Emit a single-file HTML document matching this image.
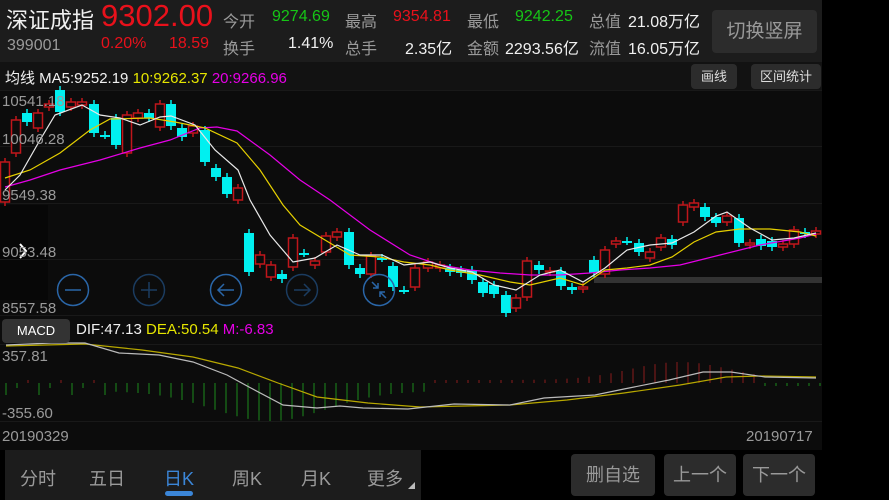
<!DOCTYPE html>
<html><head><meta charset="utf-8">
<style>
*{margin:0;padding:0;box-sizing:border-box}
body{width:889px;height:500px;background:#000;overflow:hidden;position:relative;font-family:"Liberation Sans","Noto Sans CJK SC",sans-serif;}
.a{position:absolute;white-space:nowrap}
#hdr{position:absolute;left:0;top:0;width:822px;height:62px;background:#1c1c1c}
#tb{position:absolute;left:0;top:62px;width:822px;height:28px;background:#121212}
#ch{position:absolute;left:0;top:90px;width:822px;height:360px;background:#0c0c0c}
#nav{position:absolute;left:822px;top:0;width:67px;height:500px;background:#000}
.g{color:#9a9a9a}.w{color:#f0f0f0}.r{color:#e8111b}.gr{color:#16c516}
.btn{position:absolute;background:#2c2c2c;border-radius:4px;color:#999;text-align:center}
</style></head><body>
<div id="hdr"></div><div id="tb"></div><div id="ch"></div><div id="nav"></div>

<div class="a w" style="left:6px;top:3px;font-size:22px">深证成指</div>
<div class="a r" style="left:101px;top:-2px;font-size:31px">9302.00</div>
<div class="a g" style="left:223px;top:8px;font-size:16px">今开</div>
<div class="a gr" style="left:272px;top:8px;font-size:16px">9274.69</div>
<div class="a g" style="left:345px;top:8px;font-size:16px">最高</div>
<div class="a r" style="left:393px;top:8px;font-size:16px">9354.81</div>
<div class="a g" style="left:467px;top:8px;font-size:16px">最低</div>
<div class="a gr" style="left:515px;top:8px;font-size:16px">9242.25</div>
<div class="a g" style="left:589px;top:8px;font-size:16px">总值</div>
<div class="a w" style="left:628px;top:8px;font-size:16px">21.08万亿</div>
<div class="a g" style="left:7px;top:37px;font-size:16px">399001</div>
<div class="a r" style="left:101px;top:35px;font-size:16px">0.20%</div>
<div class="a r" style="left:169px;top:35px;font-size:16px">18.59</div>
<div class="a g" style="left:223px;top:35px;font-size:16px">换手</div>
<div class="a w" style="left:288px;top:35px;font-size:16px">1.41%</div>
<div class="a g" style="left:345px;top:35px;font-size:16px">总手</div>
<div class="a w" style="left:405px;top:35px;font-size:16px">2.35亿</div>
<div class="a g" style="left:467px;top:35px;font-size:16px">金额</div>
<div class="a w" style="left:505px;top:35px;font-size:16px">2293.56亿</div>
<div class="a g" style="left:589px;top:35px;font-size:16px">流值</div>
<div class="a w" style="left:628px;top:35px;font-size:16px">16.05万亿</div>
<div class="btn" style="left:712px;top:10px;width:105px;height:43px;line-height:43px;font-size:19px">切换竖屏</div>

<div class="a w" style="left:5px;top:67px;font-size:15px">均线 MA5:9252.19 <span style="color:#e6e600">10:9262.37</span> <span style="color:#e600e6">20:9266.96</span></div>
<div class="btn" style="left:691px;top:64px;width:46px;height:25px;line-height:25px;font-size:13px;color:#ddd">画线</div>
<div class="btn" style="left:751px;top:64px;width:70px;height:25px;line-height:25px;font-size:13px;color:#ddd">区间统计</div>

<svg class="a" style="left:0;top:0" width="822" height="500" id="sv">
<rect x="0" y="205" width="48" height="95" fill="#070707"/>
<g stroke="#191919" stroke-width="1">
<line x1="0" y1="90.5" x2="822" y2="90.5"/><line x1="0" y1="146.5" x2="822" y2="146.5"/><line x1="0" y1="203.5" x2="822" y2="203.5"/><line x1="0" y1="259.5" x2="822" y2="259.5"/><line x1="0" y1="315.5" x2="822" y2="315.5"/>
<line x1="0" y1="344.5" x2="822" y2="344.5"/><line x1="0" y1="421.5" x2="822" y2="421.5"/>
</g>
<rect x="594" y="277" width="228" height="6" fill="#333"/>
<g id="cd"></g>
<polyline fill="none" stroke="#e600e6" stroke-width="1.2" points="5,187 30,180 60,170 100,160 140,148 170,140 200,128 217,127 237,131 270,155 300,180 330,200 370,230 410,255 440,265 470,270 500,273 530,275 560,275 590,273 620,270 650,268 680,265 720,255 760,245 800,238 816,234"/>
<polyline fill="none" stroke="#e6d000" stroke-width="1.2" points="5,178 30,170 60,153 90,130 110,119 150,118 175,122 205,128 237,143 260,170 283,205 300,225 325,240 350,255 380,257 404,262 430,265 450,270 480,275 510,282 530,285 560,278 583,285 605,270 627,268 650,265 672,257 694,242 716,232 740,229 770,229 800,232 816,236"/>
<polyline fill="none" stroke="#e8e8e8" stroke-width="1.2" points="5,190 20,175 40,140 55,115 82,105 100,115 120,118 140,125 160,117 171,116 195,125 215,150 238,170 250,200 270,235 293,262 315,258 337,245 360,255 382,255 404,265 430,262 450,268 472,272 494,285 516,290 540,275 560,270 583,282 605,268 627,250 650,245 672,243 694,232 716,216 727,212 750,228 772,240 794,238 816,233"/>
<g fill="none" stroke-width="1.5">
<circle cx="73" cy="290" r="15.5" stroke="#2a66a8"/><line x1="65" y1="290" x2="81" y2="290" stroke="#2a66a8"/>
<circle cx="149" cy="290" r="15.5" stroke="#1b3c60"/><path d="M141 290H157M149 282V298" stroke="#1b3c60"/>
<circle cx="226" cy="290" r="15.5" stroke="#2a66a8"/><path d="M218 290H234M224 284L218 290L224 296" stroke="#2a66a8"/>
<circle cx="302" cy="290" r="15.5" stroke="#1b3c60"/><path d="M294 290H310M304 284L310 290L304 296" stroke="#1b3c60"/>
<circle cx="379" cy="290" r="15.5" stroke="#2a66a8"/><path d="M372 282L378 288M373 288H378V283M386 298L380 292M385 292H380V297" stroke="#2a66a8"/>
</g>
<path d="M20 244L26 251L20 258" stroke="#fff" stroke-width="2" fill="none"/>
<g id="hb"></g>
<polyline fill="none" stroke="#b8a800" stroke-width="1.2" points="6,346 85,344 142,350 193,357 238,368 278,383 317,397 368,403 420,407 510,405 567,400 624,393 680,385 726,377 760,376 816,377"/>
<polyline fill="none" stroke="#bbbbbb" stroke-width="1.2" points="6,345 51,343 85,343 119,353 159,355 193,362 227,375 249,387 283,405 317,408 340,406 363,408 408,409 454,404 510,405 544,398 595,395 624,389 669,380 703,372 731,372 765,377 816,378"/>
<g fill="none" stroke="#ccc" stroke-width="2">
<path d="M860 130L846 139L860 148Z" stroke-linejoin="round"/>
<circle cx="855" cy="250" r="10"/>
<rect x="847" y="352" width="16" height="17" rx="1"/>
</g>
</svg>

<div class="a g" style="left:2px;top:93px;font-size:15px">10541.18</div>
<div class="a g" style="left:2px;top:131px;font-size:15px">10046.28</div>
<div class="a g" style="left:2px;top:187px;font-size:15px">9549.38</div>
<div class="a g" style="left:2px;top:244px;font-size:15px">9053.48</div>
<div class="a g" style="left:2px;top:300px;font-size:15px">8557.58</div>

<div class="btn" style="left:2px;top:319px;width:68px;height:24px;line-height:24px;font-size:13px;color:#fff;background:#333">MACD</div>
<div class="a w" style="left:76px;top:321px;font-size:15px">DIF:47.13 <span style="color:#e6e600">DEA:50.54</span> <span style="color:#e600e6">M:-6.83</span></div>
<div class="a g" style="left:2px;top:348px;font-size:15px">357.81</div>
<div class="a g" style="left:2px;top:405px;font-size:15px">-355.60</div>
<div class="a g" style="left:2px;top:428px;font-size:15px">20190329</div>
<div class="a g" style="left:746px;top:428px;font-size:15px">20190717</div>

<div class="a" style="left:5px;top:450px;width:416px;height:50px;background:#1c1c1c"></div>
<div class="a g" style="left:20px;top:465px;font-size:18px">分时</div>
<div class="a g" style="left:89px;top:465px;font-size:18px">五日</div>
<div class="a" style="left:164px;top:465px;font-size:18px;color:#3b86d8">日K</div>
<div class="a" style="left:165px;top:491px;width:28px;height:5px;border-radius:3px;background:#3b86d8"></div>
<div class="a g" style="left:232px;top:465px;font-size:18px">周K</div>
<div class="a g" style="left:301px;top:465px;font-size:18px">月K</div>
<div class="a g" style="left:367px;top:465px;font-size:18px">更多</div>
<div class="a" style="left:408px;top:482px;width:0;height:0;border-left:7px solid transparent;border-bottom:7px solid #bbb"></div>
<div class="btn" style="left:571px;top:454px;width:84px;height:42px;line-height:42px;font-size:18px">删自选</div>
<div class="btn" style="left:664px;top:454px;width:72px;height:42px;line-height:42px;font-size:18px">上一个</div>
<div class="btn" style="left:743px;top:454px;width:72px;height:42px;line-height:42px;font-size:18px">下一个</div>

<script>
var C=[[5,162,202,'r'],[16,120,153,'r'],[27,113,122,'c'],[38,113,128,'r'],[49,104,107,'r'],[60,90,112,'c'],[71,102,107,'r'],[82,102,105,'r'],[94,104,133,'c'],[105,135,135,'c'],[116,118,145,'c'],[127,115,153,'r'],[138,113,118,'r'],[149,113,118,'c'],[160,104,127,'r'],[171,104,126,'c'],[182,128,137,'c'],[193,126,133,'r'],[205,130,162,'c'],[216,168,177,'c'],[227,177,194,'c'],[238,188,200,'r'],[249,233,272,'c'],[260,255,264,'r'],[271,265,277,'r'],[282,274,279,'c'],[293,238,267,'r'],[304,253,253,'c'],[315,261,265,'r'],[326,236,252,'r'],[337,232,237,'r'],[349,232,265,'c'],[360,268,274,'c'],[371,256,274,'r'],[382,258,258,'c'],[393,266,287,'c'],[404,290,290,'c'],[415,268,287,'r'],[428,262,268,'r'],[440,265,268,'r'],[450,268,272,'c'],[461,270,273,'c'],[472,270,280,'c'],[483,282,293,'c'],[494,285,294,'c'],[506,295,313,'c'],[516,298,308,'r'],[527,261,297,'r'],[539,265,270,'c'],[550,271,272,'r'],[561,271,286,'c'],[572,287,290,'c'],[583,287,289,'r'],[594,260,273,'c'],[605,250,274,'r'],[616,241,244,'r'],[627,241,241,'c'],[639,243,252,'c'],[650,252,258,'r'],[661,238,247,'r'],[672,239,245,'c'],[683,205,222,'r'],[694,203,207,'r'],[705,207,217,'c'],[716,217,223,'c'],[727,216,222,'r'],[739,218,243,'c'],[750,243,245,'r'],[761,239,246,'c'],[772,241,247,'c'],[783,244,247,'r'],[794,230,244,'r'],[805,232,234,'c'],[816,231,234,'r']];
var s='';C.forEach(function(c){var x=c[0],t=c[1],b=c[2],col=c[3]=='r'?'#c0161b':'#00f0f0';var h=Math.max(b-t,1);var hi=t-4,lo=b+4;s+='<line x1="'+x+'" y1="'+hi+'" x2="'+x+'" y2="'+lo+'" stroke="'+col+'" stroke-width="1.5"/>';if(c[3]=='r')s+='<rect x="'+(x-4.5)+'" y="'+t+'" width="9" height="'+h+'" fill="#0c0c0c" stroke="'+col+'" stroke-width="1.5"/>';else s+='<rect x="'+(x-5)+'" y="'+t+'" width="10" height="'+Math.max(h,2)+'" fill="'+col+'"/>';});
document.getElementById('cd').innerHTML=s;
var h='';for(var i=0;i<75;i++){var x=6+i*11,v;if(x<430){v=(x<110)?(i%3==0?-12:(i%3==1?-5:3)):-(8+30*Math.exp(-Math.pow((x-270)/80,2)));}else if(x<760){v=3+18*Math.exp(-Math.pow((x-680)/70,2));}else v=-3;var y0=383;var col=v<0?'#1d8a1d':'#8a1d1d';h+='<line x1="'+x+'" y1="'+y0+'" x2="'+x+'" y2="'+(y0-v)+'" stroke="'+col+'" stroke-width="1"/>';}
document.getElementById('hb').innerHTML=h;
</script>
</body></html>
